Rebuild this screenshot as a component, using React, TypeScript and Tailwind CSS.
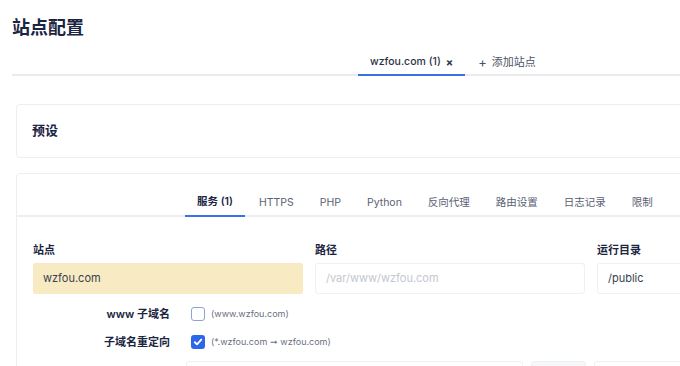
const font = "font-['Inter','Noto_Sans_CJK_SC',sans-serif]";

const cardTabs = ["服务 (1)", "HTTPS", "PHP", "Python", "反向代理", "路由设置", "日志记录", "限制"];

function Check({ checked }: { checked?: boolean }) {
	return checked ? (
		<span className="block w-[14px] h-[14px] rounded-[3px] bg-[#2c66e9] flex items-center justify-center">
			<svg width="10" height="10" viewBox="0 0 10 10" fill="none">
				<path d="M1.8 5.2 4 7.3 8.3 2.6" stroke="white" strokeWidth="1.9" strokeLinecap="round" strokeLinejoin="round" />
			</svg>
		</span>
	) : (
		<span className="block w-[14px] h-[14px] rounded-[3px] border border-[#8da3d6] bg-white" />
	);
}

export default function App() {
	return (
		<div className={`w-[680px] h-[366px] overflow-hidden bg-white ${font} text-[#1c2540]`}>
			<div className="w-[780px] pl-3">
				<h1 className="pt-[15px] h-[48px] text-[18px] leading-[26px] font-bold text-[#1b2442]">站点配置</h1>

				<div className="flex h-[28px] border-b-2 border-[#e9ebef] pl-[346px]">
					<div className="flex items-center gap-[5px] px-[12px] pt-[2px] h-[28px] border-b-2 border-[#3d6fe6] text-[10.5px] font-medium text-[#2c3347]">
						wzfou.com (1)
						<span className="text-[11px] font-bold leading-none">×</span>
					</div>
					<div className="flex items-center px-[13px] pt-[2px] h-[26px] text-[11px] text-[#4b5266]">
						<span className="mr-[5px] text-[13px] leading-none">+</span>添加站点
					</div>
				</div>

				<div className="ml-1 mt-[28px] h-[54px] border border-[#eceef2] rounded-[4px] flex items-center pl-[15px]">
					<span className="text-[13px] font-bold text-[#1b2442]">预设</span>
				</div>

				<div className="ml-1 mt-[15px] border border-[#eceef2] rounded-[4px]">
					<div className="h-[43px] border-b-2 border-[#eceef0] flex items-end pl-[168px] gap-[2px]">
						{cardTabs.map((t, i) => (
							<div
								key={t}
								className={`px-3 flex items-center h-[28px] -mb-[2px] text-[10.5px] ${
									i === 0
										? "border-b-2 border-[#3d6fe6] font-semibold text-[#1b2442]"
										: "text-[#5a6174]"
								}`}
							>
								{t}
							</div>
						))}
					</div>

					<div className="px-[16px] pt-[26px]">
						<div className="grid grid-cols-[270px_270px_270px] gap-x-3">
							<div className="text-[11px] leading-[14px] font-semibold">站点</div>
							<div className="text-[11px] leading-[14px] font-semibold">路径</div>
							<div className="text-[11px] leading-[14px] font-semibold">运行目录</div>
							<div className="mt-[6px] h-[31px] bg-[#f8ebc3] rounded-[2px] flex items-center px-[10px] text-[11px] text-[#3a4150]">wzfou.com</div>
							<div className="mt-[6px] h-[31px] border border-[#eef0f3] rounded-[3px] flex items-center px-[10px] text-[11px] text-[#c3c7cf]">/var/www/wzfou.com</div>
							<div className="mt-[6px] h-[31px] border border-[#eef0f3] rounded-[3px] flex items-center px-[10px] text-[11px] text-[#3a4150]">/public</div>
						</div>

						<div className="mt-[6px] flex items-center h-[28px]">
							<span className="w-[137px] text-right text-[11px] font-semibold">www 子域名</span>
							<span className="ml-[21px]"><Check /></span>
							<span className="ml-[6px] text-[9px] text-[#6b7182]">(www.wzfou.com)</span>
						</div>
						<div className="flex items-center h-[28px]">
							<span className="w-[137px] text-right text-[11px] font-semibold">子域名重定向</span>
							<span className="ml-[21px]"><Check checked /></span>
							<span className="ml-[6px] text-[9px] text-[#6b7182]">(*.wzfou.com ➞ wzfou.com)</span>
						</div>

						<div className="mt-[5px] flex gap-[8px] pl-[153px]">
							<div className="w-[337px] h-[31px] border border-[#eef0f3] rounded-[3px]" />
							<div className="w-[55px] h-[31px] border border-[#eef0f3] bg-[#f6f7f9] rounded-[3px]" />
							<div className="w-[120px] h-[31px] border border-[#eef0f3] rounded-[3px]" />
						</div>
					</div>
				</div>
			</div>
		</div>
	);
}
